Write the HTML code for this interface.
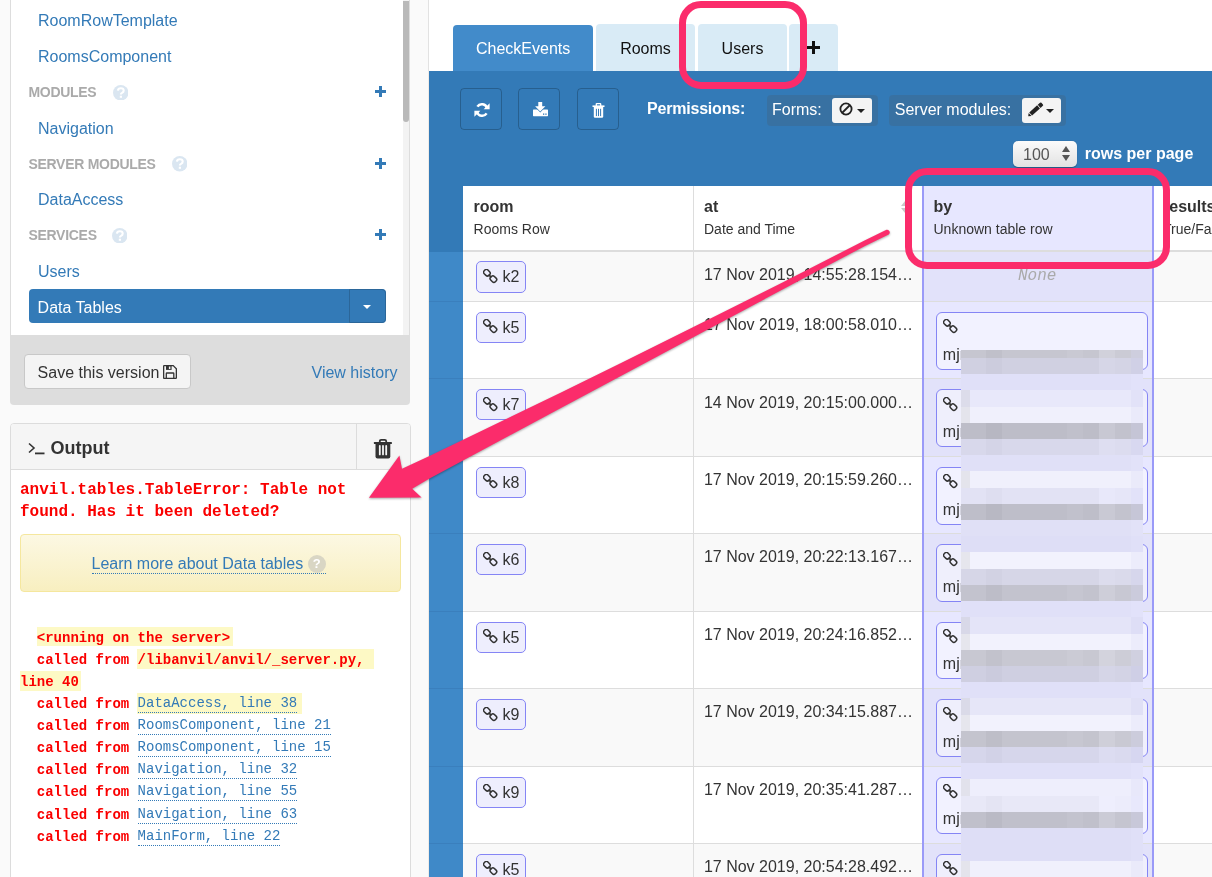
<!DOCTYPE html>
<html><head><meta charset="utf-8"><style>
html,body{margin:0;padding:0;}
body{will-change:transform;width:1212px;height:877px;overflow:hidden;position:relative;background:#fff;font-family:"Liberation Sans",sans-serif;}
.r{position:absolute;}
.t{position:absolute;white-space:nowrap;}
.help{border-radius:50%;color:#fff;font:bold 12px/15.5px "Liberation Sans",sans-serif;text-align:center;}
.dot{border-bottom:1px dotted #337ab7;padding-bottom:1px}
.qhelp{display:inline-block;width:18px;height:18px;border-radius:50%;background:#d9d6c4;color:#fff;font-size:13px;line-height:18px;text-align:center;font-weight:bold;vertical-align:1px}
.dotl{border-bottom:1px dotted #337ab7;line-height:17px!important;}
</style></head><body>
<div class="r" style="left:0.00px;top:0.00px;width:428.00px;height:877.00px;background:#fafafa"></div>
<div class="r" style="left:428.00px;top:71.00px;width:1.00px;height:806.00px;background:#efebe7"></div>
<div class="r" style="left:10.00px;top:-2.00px;width:400.00px;height:337.00px;background:#fff;border:1px solid #ddd;border-bottom:none;box-sizing:border-box"></div>
<div class="r" style="left:10.00px;top:335.00px;width:400.00px;height:69.50px;background:#dddddd;border-radius:0 0 4px 4px"></div>
<div class="r" style="left:402.50px;top:0.00px;width:6.50px;height:335.00px;background:#f3f3f3"></div>
<div class="r" style="left:403.00px;top:1.00px;width:6.00px;height:121.00px;background:#b9b9b9;border-radius:0 0 3px 3px"></div>
<div class="t " style="left:38.00px;top:11px;font-size:16px;line-height:20px;font-weight:normal;color:#337ab7;font-family:'Liberation Sans', sans-serif;">RoomRowTemplate</div>
<div class="t " style="left:38.00px;top:47px;font-size:16px;line-height:20px;font-weight:normal;color:#337ab7;font-family:'Liberation Sans', sans-serif;">RoomsComponent</div>
<div class="t " style="left:28.40px;top:83px;font-size:14px;line-height:18px;font-weight:bold;color:#aaaaaa;font-family:'Liberation Sans', sans-serif;letter-spacing:-0.28px">MODULES</div>
<svg class="r" style="left:112.85px;top:84.55px" width="15.5" height="15.5" viewBox="0 0 15.5 15.5"><circle cx="7.75" cy="7.75" r="7.75" fill="#dae6f1"/><path d="M4.9 5.6Q5.1 3.2 7.9 3.2Q10.7 3.2 10.7 5.6Q10.7 7.1 9.1 7.9Q7.9 8.5 7.9 9.6" fill="none" stroke="#fff" stroke-width="2.1"/><rect x="6.8" y="10.7" width="2.2" height="2.1" fill="#fff"/></svg>
<div class="r" style="left:375.00px;top:90.10px;width:11.00px;height:2.80px;background:#337ab7"></div>
<div class="r" style="left:379.10px;top:86.00px;width:2.80px;height:11.00px;background:#337ab7"></div>
<div class="t " style="left:38.00px;top:119px;font-size:16px;line-height:20px;font-weight:normal;color:#337ab7;font-family:'Liberation Sans', sans-serif;">Navigation</div>
<div class="t " style="left:28.40px;top:155px;font-size:14px;line-height:18px;font-weight:bold;color:#aaaaaa;font-family:'Liberation Sans', sans-serif;letter-spacing:-0.28px">SERVER MODULES</div>
<svg class="r" style="left:171.65px;top:156.25px" width="15.5" height="15.5" viewBox="0 0 15.5 15.5"><circle cx="7.75" cy="7.75" r="7.75" fill="#dae6f1"/><path d="M4.9 5.6Q5.1 3.2 7.9 3.2Q10.7 3.2 10.7 5.6Q10.7 7.1 9.1 7.9Q7.9 8.5 7.9 9.6" fill="none" stroke="#fff" stroke-width="2.1"/><rect x="6.8" y="10.7" width="2.2" height="2.1" fill="#fff"/></svg>
<div class="r" style="left:375.00px;top:161.80px;width:11.00px;height:2.80px;background:#337ab7"></div>
<div class="r" style="left:379.10px;top:157.70px;width:2.80px;height:11.00px;background:#337ab7"></div>
<div class="t " style="left:38.00px;top:190px;font-size:16px;line-height:20px;font-weight:normal;color:#337ab7;font-family:'Liberation Sans', sans-serif;">DataAccess</div>
<div class="t " style="left:28.40px;top:226px;font-size:14px;line-height:18px;font-weight:bold;color:#aaaaaa;font-family:'Liberation Sans', sans-serif;letter-spacing:-0.28px">SERVICES</div>
<svg class="r" style="left:111.65px;top:227.75px" width="15.5" height="15.5" viewBox="0 0 15.5 15.5"><circle cx="7.75" cy="7.75" r="7.75" fill="#dae6f1"/><path d="M4.9 5.6Q5.1 3.2 7.9 3.2Q10.7 3.2 10.7 5.6Q10.7 7.1 9.1 7.9Q7.9 8.5 7.9 9.6" fill="none" stroke="#fff" stroke-width="2.1"/><rect x="6.8" y="10.7" width="2.2" height="2.1" fill="#fff"/></svg>
<div class="r" style="left:375.00px;top:233.30px;width:11.00px;height:2.80px;background:#337ab7"></div>
<div class="r" style="left:379.10px;top:229.20px;width:2.80px;height:11.00px;background:#337ab7"></div>
<div class="t " style="left:38.00px;top:262px;font-size:16px;line-height:20px;font-weight:normal;color:#337ab7;font-family:'Liberation Sans', sans-serif;">Users</div>
<div class="r" style="left:29.00px;top:289.00px;width:357.00px;height:34.00px;background:#337ab7;border-radius:4px"></div>
<div class="r" style="left:349.00px;top:289.00px;width:37.00px;height:34.00px;border:1px solid #2b6699;border-radius:0 4px 4px 0;box-sizing:border-box"></div>
<div class="r" style="left:362.8px;top:304.5px;width:0;height:0;border-left:4px solid transparent;border-right:4px solid transparent;border-top:4px solid #fff"></div>
<div class="t " style="left:37.60px;top:298px;font-size:16px;line-height:20px;font-weight:normal;color:#fff;font-family:'Liberation Sans', sans-serif;">Data Tables</div>
<div class="r" style="left:23.80px;top:353.60px;width:167.70px;height:35.60px;background:#f4f4f4;border:1px solid #c8c8c8;border-radius:4px;box-sizing:border-box"></div>
<div class="t " style="left:37.60px;top:363px;font-size:16px;line-height:20px;font-weight:normal;color:#333;font-family:'Liberation Sans', sans-serif;">Save this version</div>
<svg class="r" style="left:163.2px;top:365.1px" width="14" height="14" viewBox="0 0 14 14"><path d="M0.65 1.2Q0.65 0.65 1.2 0.65H10.2L13.35 3.8V12.8Q13.35 13.35 12.8 13.35H1.2Q0.65 13.35 0.65 12.8Z" fill="none" stroke="#333" stroke-width="1.3"/><rect x="3" y="0.7" width="5.6" height="4.2" fill="#333"/><rect x="5.9" y="1.5" width="1.5" height="2.5" fill="#f4f4f4"/><path d="M3.3 13.3V8.6Q3.3 8 3.9 8H10.2Q10.8 8 10.8 8.6V13.3" fill="none" stroke="#333" stroke-width="1.3"/></svg>
<div class="t " style="left:311.50px;top:363px;font-size:16px;line-height:20px;font-weight:normal;color:#337ab7;font-family:'Liberation Sans', sans-serif;">View history</div>
<div class="r" style="left:10.00px;top:423.40px;width:400.50px;height:476.60px;background:#fff;border:1px solid #dcdcdc;border-radius:4px;box-sizing:border-box"></div>
<div class="r" style="left:11.00px;top:424.40px;width:398.50px;height:45.60px;background:#f5f5f5;border-bottom:1px solid #dcdcdc;border-radius:3px 3px 0 0;box-sizing:border-box"></div>
<div class="r" style="left:356.00px;top:424.40px;width:1.00px;height:45.10px;background:#dcdcdc"></div>
<svg class="r" style="left:28px;top:442px" width="18" height="14" viewBox="0 0 18 14"><path d="M1 1.5L6 6L1 10.5" fill="none" stroke="#333" stroke-width="1.6"/><rect x="7" y="10.5" width="9.5" height="1.8" fill="#333"/></svg>
<div class="t " style="left:50.60px;top:437px;font-size:18px;line-height:22px;font-weight:bold;color:#333;font-family:'Liberation Sans', sans-serif;">Output</div>
<svg class="r" style="left:373px;top:438px" width="20" height="22" viewBox="0 0 20 22"><path d="M6.8 4.5V3.2Q6.8 1.8 8.2 1.8H11.8Q13.2 1.8 13.2 3.2V4.5" fill="none" stroke="#333" stroke-width="1.8"/><rect x="0.9" y="4.1" width="18" height="1.8" rx="0.5" fill="#333"/><path d="M2.5 5.5H17.3V18.5Q17.3 20.5 15.3 20.5H4.5Q2.5 20.5 2.5 18.5Z" fill="#333"/><rect x="5.9" y="7" width="1.8" height="10.3" rx="0.9" fill="#f5f5f5"/><rect x="9.1" y="7" width="1.8" height="10.3" rx="0.9" fill="#f5f5f5"/><rect x="12.3" y="7" width="1.8" height="10.3" rx="0.9" fill="#f5f5f5"/></svg>
<div class="t " style="left:20.00px;top:480px;font-size:16px;line-height:20px;font-weight:bold;color:#fa0000;font-family:'Liberation Mono', monospace;">anvil.tables.TableError: Table not</div>
<div class="t " style="left:20.00px;top:502px;font-size:16px;line-height:20px;font-weight:bold;color:#fa0000;font-family:'Liberation Mono', monospace;">found. Has it been deleted?</div>
<div class="r" style="left:20.00px;top:534.00px;width:381.00px;height:57.60px;background:linear-gradient(#fcf8e3,#f8efc0);border:1px solid #f5e79e;border-radius:4px;box-sizing:border-box"></div>
<div class="t " style="left:91.50px;top:554px;font-size:16px;line-height:20px;font-weight:normal;color:#337ab7;font-family:'Liberation Sans', sans-serif;"><span class="dot">Learn more about Data tables <span class="qhelp">?</span></span></div>
<div class="r" style="left:37.00px;top:627.00px;width:196.40px;height:19.00px;background:#fdf9c5"></div>
<div class="r" style="left:137.00px;top:649.00px;width:237.00px;height:19.50px;background:#fdf9c5"></div>
<div class="r" style="left:20.00px;top:671.40px;width:61.00px;height:19.60px;background:#fdf9c5"></div>
<div class="r" style="left:137.00px;top:693.40px;width:165.00px;height:20.20px;background:#fdf9c5"></div>
<div class="t " style="left:36.80px;top:629px;font-size:14px;line-height:18px;font-weight:bold;color:#fa0000;font-family:'Liberation Mono', monospace;">&lt;running on the server&gt;</div>
<div class="t " style="left:36.80px;top:651px;font-size:14px;line-height:18px;font-weight:bold;color:#fa0000;font-family:'Liberation Mono', monospace;">called from</div>
<div class="t " style="left:137.60px;top:651px;font-size:14px;line-height:18px;font-weight:bold;color:#fa0000;font-family:'Liberation Mono', monospace;">/libanvil/anvil/_server.py,</div>
<div class="t " style="left:20.00px;top:673px;font-size:14px;line-height:18px;font-weight:bold;color:#fa0000;font-family:'Liberation Mono', monospace;">line 40</div>
<div class="t " style="left:36.80px;top:695px;font-size:14px;line-height:18px;font-weight:bold;color:#fa0000;font-family:'Liberation Mono', monospace;">called from</div>
<div class="t dotl" style="left:137.60px;top:695px;font-size:14px;line-height:18px;font-weight:normal;color:#337ab7;font-family:'Liberation Mono', monospace;">DataAccess, line 38</div>
<div class="t " style="left:36.80px;top:717px;font-size:14px;line-height:18px;font-weight:bold;color:#fa0000;font-family:'Liberation Mono', monospace;">called from</div>
<div class="t dotl" style="left:137.60px;top:717px;font-size:14px;line-height:18px;font-weight:normal;color:#337ab7;font-family:'Liberation Mono', monospace;">RoomsComponent, line 21</div>
<div class="t " style="left:36.80px;top:739px;font-size:14px;line-height:18px;font-weight:bold;color:#fa0000;font-family:'Liberation Mono', monospace;">called from</div>
<div class="t dotl" style="left:137.60px;top:739px;font-size:14px;line-height:18px;font-weight:normal;color:#337ab7;font-family:'Liberation Mono', monospace;">RoomsComponent, line 15</div>
<div class="t " style="left:36.80px;top:761px;font-size:14px;line-height:18px;font-weight:bold;color:#fa0000;font-family:'Liberation Mono', monospace;">called from</div>
<div class="t dotl" style="left:137.60px;top:761px;font-size:14px;line-height:18px;font-weight:normal;color:#337ab7;font-family:'Liberation Mono', monospace;">Navigation, line 32</div>
<div class="t " style="left:36.80px;top:783px;font-size:14px;line-height:18px;font-weight:bold;color:#fa0000;font-family:'Liberation Mono', monospace;">called from</div>
<div class="t dotl" style="left:137.60px;top:783px;font-size:14px;line-height:18px;font-weight:normal;color:#337ab7;font-family:'Liberation Mono', monospace;">Navigation, line 55</div>
<div class="t " style="left:36.80px;top:806px;font-size:14px;line-height:18px;font-weight:bold;color:#fa0000;font-family:'Liberation Mono', monospace;">called from</div>
<div class="t dotl" style="left:137.60px;top:806px;font-size:14px;line-height:18px;font-weight:normal;color:#337ab7;font-family:'Liberation Mono', monospace;">Navigation, line 63</div>
<div class="t " style="left:36.80px;top:828px;font-size:14px;line-height:18px;font-weight:bold;color:#fa0000;font-family:'Liberation Mono', monospace;">called from</div>
<div class="t dotl" style="left:137.60px;top:828px;font-size:14px;line-height:18px;font-weight:normal;color:#337ab7;font-family:'Liberation Mono', monospace;">MainForm, line 22</div>
<div class="r" style="left:428.00px;top:0.00px;width:784.00px;height:71.00px;background:#fff"></div>
<div class="r" style="left:428.00px;top:0.00px;width:1.00px;height:71.00px;background:#e2e2e2"></div>
<div class="r" style="left:429.00px;top:71.00px;width:783.00px;height:806.00px;background:#337ab7"></div>
<div class="r" style="left:453.00px;top:25.00px;width:140.00px;height:46.00px;background:#428bca;border-radius:4px 4px 0 0"></div>
<div class="t " style="left:476.00px;top:39px;font-size:16px;line-height:20px;font-weight:normal;color:#fff;font-family:'Liberation Sans', sans-serif;">CheckEvents</div>
<div class="r" style="left:596.00px;top:24.00px;width:99.00px;height:47.00px;background:#d9ebf6;border-radius:4px 4px 0 0"></div>
<div class="t" style="left:596px;top:39px;width:99px;text-align:center;font-size:16px;line-height:20px;color:#111;font-family:'Liberation Sans',sans-serif">Rooms</div>
<div class="r" style="left:698.00px;top:24.00px;width:89.00px;height:47.00px;background:#d9ebf6;border-radius:4px 4px 0 0"></div>
<div class="t" style="left:698px;top:39px;width:89px;text-align:center;font-size:16px;line-height:20px;color:#111;font-family:'Liberation Sans',sans-serif">Users</div>
<div class="r" style="left:789.00px;top:24.00px;width:49.00px;height:47.00px;background:#d9ebf6;border-radius:4px 4px 0 0"></div>
<div class="r" style="left:807.00px;top:46.00px;width:13.00px;height:3.00px;background:#111"></div>
<div class="r" style="left:812.00px;top:41.00px;width:3.00px;height:13.00px;background:#111"></div>
<div class="r" style="left:460.30px;top:88.40px;width:41.60px;height:42.10px;border:1px solid rgba(0,0,0,0.22);border-radius:4px;box-sizing:border-box"></div>
<div class="r" style="left:518.40px;top:88.40px;width:42.10px;height:42.10px;border:1px solid rgba(0,0,0,0.22);border-radius:4px;box-sizing:border-box"></div>
<div class="r" style="left:577.00px;top:88.40px;width:41.70px;height:42.10px;border:1px solid rgba(0,0,0,0.22);border-radius:4px;box-sizing:border-box"></div>
<svg class="r" style="left:473.5px;top:101.8px" width="16" height="16" viewBox="0 0 16 16"><path d="M13 6.3A5.3 5.3 0 0 0 3.4 4.6" fill="none" stroke="#fff" stroke-width="2.5"/><path d="M9.6 7.2L15.6 7.2L15.6 1.2Z" fill="#fff"/><path d="M3 9.7A5.3 5.3 0 0 0 12.6 11.4" fill="none" stroke="#fff" stroke-width="2.5"/><path d="M6.4 8.8L0.4 8.8L0.4 14.8Z" fill="#fff"/></svg>
<svg class="r" style="left:533px;top:102px" width="15" height="14.5" viewBox="0 0 15 14.5"><rect x="0" y="7.6" width="15" height="6.6" rx="0.6" fill="#fff"/><path d="M5.3 0H9.2V4.3H12.4L7.25 9.6L2.1 4.3H5.3Z" fill="#fff" stroke="#337ab7" stroke-width="1.1" paint-order="stroke"/><rect x="10" y="11.5" width="1.3" height="1.3" fill="#337ab7"/><rect x="12.3" y="11.5" width="1.3" height="1.3" fill="#337ab7"/></svg>
<svg class="r" style="left:591.5px;top:102.5px" width="13" height="15" viewBox="0 0 13 15"><path d="M0.5 3.2H12.5" stroke="#fff" stroke-width="1.6"/><path d="M4.3 3V1.2Q4.3 0.7 4.8 0.7H8.2Q8.7 0.7 8.7 1.2V3" fill="none" stroke="#fff" stroke-width="1.3"/><path d="M1.8 4H11.2V13.5Q11.2 14.8 10 14.8H3Q1.8 14.8 1.8 13.5Z" fill="#fff"/><rect x="3.9" y="5.8" width="1" height="7.3" fill="#337ab7"/><rect x="6" y="5.8" width="1" height="7.3" fill="#337ab7"/><rect x="8.1" y="5.8" width="1" height="7.3" fill="#337ab7"/></svg>
<div class="t " style="left:647.00px;top:99px;font-size:16px;line-height:20px;font-weight:bold;color:#fff;font-family:'Liberation Sans', sans-serif;letter-spacing:-0.2px">Permissions:</div>
<div class="r" style="left:767.00px;top:94.70px;width:110.60px;height:31.70px;background:rgba(80,80,80,0.2);border-radius:4px"></div>
<div class="t " style="left:772.00px;top:100px;font-size:16px;line-height:20px;font-weight:normal;color:#fff;font-family:'Liberation Sans', sans-serif;">Forms:</div>
<div class="r" style="left:832.00px;top:98.30px;width:39.80px;height:24.30px;background:#f4f4f4;border-radius:3px"></div>
<svg class="r" style="left:839px;top:102px" width="14" height="14" viewBox="0 0 14 14"><circle cx="7" cy="7" r="5.6" fill="none" stroke="#222" stroke-width="1.8"/><path d="M3 11L11 3" stroke="#222" stroke-width="1.8"/></svg>
<div class="r" style="left:857px;top:109px;width:0;height:0;border-left:4px solid transparent;border-right:4px solid transparent;border-top:4px solid #222"></div>
<div class="r" style="left:889.00px;top:94.70px;width:177.00px;height:31.70px;background:rgba(80,80,80,0.2);border-radius:4px"></div>
<div class="t " style="left:894.80px;top:100px;font-size:16px;line-height:20px;font-weight:normal;color:#fff;font-family:'Liberation Sans', sans-serif;">Server modules:</div>
<div class="r" style="left:1022.00px;top:98.30px;width:38.50px;height:24.30px;background:#f4f4f4;border-radius:3px"></div>
<svg class="r" style="left:1026px;top:101px" width="18" height="18" viewBox="0 0 18 18"><g transform="translate(9.2 8.9) rotate(-42)"><path d="M-9.4 0L-6.9 -2.1V2.1Z" fill="#222"/><rect x="-6.1" y="-2.1" width="10.6" height="4.2" fill="#222"/><path d="M5.3 -2.1H8.4Q9.4 -2.1 9.4 -1.1V1.1Q9.4 2.1 8.4 2.1H5.3Z" fill="#222"/></g></svg>
<div class="r" style="left:1046px;top:109px;width:0;height:0;border-left:4px solid transparent;border-right:4px solid transparent;border-top:4px solid #222"></div>
<div class="r" style="left:1013.00px;top:140.80px;width:63.60px;height:25.90px;background:linear-gradient(#fbfbfb,#e2e2e2);border-radius:5px;box-shadow:0 0.5px 1px rgba(0,0,0,0.3)"></div>
<div class="t " style="left:1023.00px;top:145px;font-size:16px;line-height:20px;font-weight:normal;color:#555;font-family:'Liberation Sans', sans-serif;">100</div>
<div class="r" style="left:1061.5px;top:146px;width:0;height:0;border-left:4px solid transparent;border-right:4px solid transparent;border-bottom:6px solid #555"></div>
<div class="r" style="left:1061.5px;top:155px;width:0;height:0;border-left:4px solid transparent;border-right:4px solid transparent;border-top:6px solid #555"></div>
<div class="t " style="left:1084.80px;top:144px;font-size:16px;line-height:20px;font-weight:bold;color:#fff;font-family:'Liberation Sans', sans-serif;">rows per page</div>
<div class="r" style="left:429.00px;top:251.50px;width:34.00px;height:625.50px;background:#3f89c8"></div>
<div class="r" style="left:463.00px;top:186.00px;width:749.00px;height:691.00px;background:#fff"></div>
<div class="r" style="left:463.00px;top:252.00px;width:749.00px;height:49.40px;background:#f9f9f9"></div>
<div class="r" style="left:463.00px;top:301.40px;width:749.00px;height:77.44px;background:#fff"></div>
<div class="r" style="left:463.00px;top:378.84px;width:749.00px;height:77.44px;background:#f9f9f9"></div>
<div class="r" style="left:463.00px;top:456.28px;width:749.00px;height:77.44px;background:#fff"></div>
<div class="r" style="left:463.00px;top:533.72px;width:749.00px;height:77.44px;background:#f9f9f9"></div>
<div class="r" style="left:463.00px;top:611.16px;width:749.00px;height:77.44px;background:#fff"></div>
<div class="r" style="left:463.00px;top:688.60px;width:749.00px;height:77.44px;background:#f9f9f9"></div>
<div class="r" style="left:463.00px;top:766.04px;width:749.00px;height:77.44px;background:#fff"></div>
<div class="r" style="left:463.00px;top:843.48px;width:749.00px;height:77.44px;background:#f9f9f9"></div>
<div class="r" style="left:922.00px;top:186.00px;width:232.00px;height:691.00px;background:rgba(170,170,255,0.28)"></div>
<div class="r" style="left:463.00px;top:300.90px;width:749.00px;height:1.00px;background:#dddddd"></div>
<div class="r" style="left:429.00px;top:300.90px;width:34.00px;height:1.00px;background:#3a7fbd"></div>
<div class="r" style="left:463.00px;top:378.34px;width:749.00px;height:1.00px;background:#dddddd"></div>
<div class="r" style="left:429.00px;top:378.34px;width:34.00px;height:1.00px;background:#3a7fbd"></div>
<div class="r" style="left:463.00px;top:455.78px;width:749.00px;height:1.00px;background:#dddddd"></div>
<div class="r" style="left:429.00px;top:455.78px;width:34.00px;height:1.00px;background:#3a7fbd"></div>
<div class="r" style="left:463.00px;top:533.22px;width:749.00px;height:1.00px;background:#dddddd"></div>
<div class="r" style="left:429.00px;top:533.22px;width:34.00px;height:1.00px;background:#3a7fbd"></div>
<div class="r" style="left:463.00px;top:610.66px;width:749.00px;height:1.00px;background:#dddddd"></div>
<div class="r" style="left:429.00px;top:610.66px;width:34.00px;height:1.00px;background:#3a7fbd"></div>
<div class="r" style="left:463.00px;top:688.10px;width:749.00px;height:1.00px;background:#dddddd"></div>
<div class="r" style="left:429.00px;top:688.10px;width:34.00px;height:1.00px;background:#3a7fbd"></div>
<div class="r" style="left:463.00px;top:765.54px;width:749.00px;height:1.00px;background:#dddddd"></div>
<div class="r" style="left:429.00px;top:765.54px;width:34.00px;height:1.00px;background:#3a7fbd"></div>
<div class="r" style="left:463.00px;top:842.98px;width:749.00px;height:1.00px;background:#dddddd"></div>
<div class="r" style="left:429.00px;top:842.98px;width:34.00px;height:1.00px;background:#3a7fbd"></div>
<div class="r" style="left:463.00px;top:250.00px;width:749.00px;height:2.00px;background:#dddddd"></div>
<div class="r" style="left:693.10px;top:186.00px;width:1.00px;height:691.00px;background:#dddddd"></div>
<div class="r" style="left:922.00px;top:186.00px;width:2.00px;height:691.00px;background:#9a9af8"></div>
<div class="r" style="left:1152.00px;top:186.00px;width:2.00px;height:691.00px;background:#9a9af8"></div>
<div class="t " style="left:473.60px;top:197px;font-size:16px;line-height:20px;font-weight:bold;color:#333;font-family:'Liberation Sans', sans-serif;">room</div>
<div class="t " style="left:473.60px;top:220px;font-size:14px;line-height:18px;font-weight:normal;color:#333;font-family:'Liberation Sans', sans-serif;">Rooms Row</div>
<div class="t " style="left:704.00px;top:197px;font-size:16px;line-height:20px;font-weight:bold;color:#333;font-family:'Liberation Sans', sans-serif;">at</div>
<div class="r" style="left:901px;top:201px;width:0;height:0;border-left:4px solid transparent;border-right:4px solid transparent;border-bottom:5px solid #c8c8c8"></div>
<div class="r" style="left:901px;top:208px;width:0;height:0;border-left:4px solid transparent;border-right:4px solid transparent;border-top:5px solid #c8c8c8"></div>
<div class="t " style="left:704.00px;top:220px;font-size:14px;line-height:18px;font-weight:normal;color:#333;font-family:'Liberation Sans', sans-serif;">Date and Time</div>
<div class="t " style="left:933.50px;top:197px;font-size:16px;line-height:20px;font-weight:bold;color:#333;font-family:'Liberation Sans', sans-serif;">by</div>
<div class="t " style="left:933.50px;top:220px;font-size:14px;line-height:18px;font-weight:normal;color:#333;font-family:'Liberation Sans', sans-serif;">Unknown table row</div>
<div class="t " style="left:1163.00px;top:197px;font-size:16px;line-height:20px;font-weight:bold;color:#333;font-family:'Liberation Sans', sans-serif;">results</div>
<div class="t " style="left:1163.00px;top:220px;font-size:14px;line-height:18px;font-weight:normal;color:#333;font-family:'Liberation Sans', sans-serif;">True/False</div>
<div class="r" style="left:476.00px;top:261.00px;width:50.00px;height:31.80px;background:#eeeefd;border:1px solid #8585f5;border-radius:5px;box-sizing:border-box"></div>
<svg class="r" style="left:482.50px;top:268.50px" width="15" height="15" viewBox="0 0 15 15"><rect x="0.6" y="1.1" width="6.6" height="5.2" rx="2.1" transform="rotate(45 3.9 3.7)" fill="none" stroke="#333" stroke-width="1.5"/><rect x="7.1" y="7.5" width="6.6" height="5.2" rx="2.1" transform="rotate(45 10.4 10.1)" fill="none" stroke="#333" stroke-width="1.5"/><path d="M5.6 5.6L8.4 8.4" stroke="#333" stroke-width="1.7"/></svg>
<div class="t " style="left:502.60px;top:267px;font-size:16px;line-height:20px;font-weight:normal;color:#333;font-family:'Liberation Sans', sans-serif;">k2</div>
<div class="t " style="left:703.90px;top:265px;font-size:16px;line-height:20px;font-weight:normal;color:#333;font-family:'Liberation Sans', sans-serif;">17 Nov 2019, 14:55:28.154…</div>
<div class="t " style="left:1018.00px;top:266px;font-size:16px;line-height:20px;font-weight:normal;color:#aaaaaa;font-family:'Liberation Mono', monospace;font-style:italic">None</div>
<div class="r" style="left:476.00px;top:311.90px;width:50.00px;height:31.00px;background:#eeeefd;border:1px solid #8585f5;border-radius:5px;box-sizing:border-box"></div>
<svg class="r" style="left:482.50px;top:319.40px" width="15" height="15" viewBox="0 0 15 15"><rect x="0.6" y="1.1" width="6.6" height="5.2" rx="2.1" transform="rotate(45 3.9 3.7)" fill="none" stroke="#333" stroke-width="1.5"/><rect x="7.1" y="7.5" width="6.6" height="5.2" rx="2.1" transform="rotate(45 10.4 10.1)" fill="none" stroke="#333" stroke-width="1.5"/><path d="M5.6 5.6L8.4 8.4" stroke="#333" stroke-width="1.7"/></svg>
<div class="t " style="left:502.60px;top:318px;font-size:16px;line-height:20px;font-weight:normal;color:#333;font-family:'Liberation Sans', sans-serif;">k5</div>
<div class="t " style="left:703.90px;top:315px;font-size:16px;line-height:20px;font-weight:normal;color:#333;font-family:'Liberation Sans', sans-serif;">17 Nov 2019, 18:00:58.010…</div>
<div class="r" style="left:936.20px;top:311.90px;width:211.80px;height:57.80px;background:rgba(255,255,255,0.45);border:1px solid #8585f5;border-radius:6px;box-sizing:border-box"></div>
<svg class="r" style="left:942.50px;top:319.40px" width="15" height="15" viewBox="0 0 15 15"><rect x="0.6" y="1.1" width="6.6" height="5.2" rx="2.1" transform="rotate(45 3.9 3.7)" fill="none" stroke="#333" stroke-width="1.5"/><rect x="7.1" y="7.5" width="6.6" height="5.2" rx="2.1" transform="rotate(45 10.4 10.1)" fill="none" stroke="#333" stroke-width="1.5"/><path d="M5.6 5.6L8.4 8.4" stroke="#333" stroke-width="1.7"/></svg>
<div class="t " style="left:942.80px;top:345px;font-size:16px;line-height:20px;font-weight:normal;color:#333;font-family:'Liberation Sans', sans-serif;">mjn</div>
<div class="r" style="left:476.00px;top:389.34px;width:50.00px;height:31.00px;background:#eeeefd;border:1px solid #8585f5;border-radius:5px;box-sizing:border-box"></div>
<svg class="r" style="left:482.50px;top:396.84px" width="15" height="15" viewBox="0 0 15 15"><rect x="0.6" y="1.1" width="6.6" height="5.2" rx="2.1" transform="rotate(45 3.9 3.7)" fill="none" stroke="#333" stroke-width="1.5"/><rect x="7.1" y="7.5" width="6.6" height="5.2" rx="2.1" transform="rotate(45 10.4 10.1)" fill="none" stroke="#333" stroke-width="1.5"/><path d="M5.6 5.6L8.4 8.4" stroke="#333" stroke-width="1.7"/></svg>
<div class="t " style="left:502.60px;top:395px;font-size:16px;line-height:20px;font-weight:normal;color:#333;font-family:'Liberation Sans', sans-serif;">k7</div>
<div class="t " style="left:703.90px;top:393px;font-size:16px;line-height:20px;font-weight:normal;color:#333;font-family:'Liberation Sans', sans-serif;">14 Nov 2019, 20:15:00.000…</div>
<div class="r" style="left:936.20px;top:389.34px;width:211.80px;height:57.80px;background:rgba(255,255,255,0.45);border:1px solid #8585f5;border-radius:6px;box-sizing:border-box"></div>
<svg class="r" style="left:942.50px;top:396.84px" width="15" height="15" viewBox="0 0 15 15"><rect x="0.6" y="1.1" width="6.6" height="5.2" rx="2.1" transform="rotate(45 3.9 3.7)" fill="none" stroke="#333" stroke-width="1.5"/><rect x="7.1" y="7.5" width="6.6" height="5.2" rx="2.1" transform="rotate(45 10.4 10.1)" fill="none" stroke="#333" stroke-width="1.5"/><path d="M5.6 5.6L8.4 8.4" stroke="#333" stroke-width="1.7"/></svg>
<div class="t " style="left:942.80px;top:422px;font-size:16px;line-height:20px;font-weight:normal;color:#333;font-family:'Liberation Sans', sans-serif;">mjn</div>
<div class="r" style="left:476.00px;top:466.78px;width:50.00px;height:31.00px;background:#eeeefd;border:1px solid #8585f5;border-radius:5px;box-sizing:border-box"></div>
<svg class="r" style="left:482.50px;top:474.28px" width="15" height="15" viewBox="0 0 15 15"><rect x="0.6" y="1.1" width="6.6" height="5.2" rx="2.1" transform="rotate(45 3.9 3.7)" fill="none" stroke="#333" stroke-width="1.5"/><rect x="7.1" y="7.5" width="6.6" height="5.2" rx="2.1" transform="rotate(45 10.4 10.1)" fill="none" stroke="#333" stroke-width="1.5"/><path d="M5.6 5.6L8.4 8.4" stroke="#333" stroke-width="1.7"/></svg>
<div class="t " style="left:502.60px;top:473px;font-size:16px;line-height:20px;font-weight:normal;color:#333;font-family:'Liberation Sans', sans-serif;">k8</div>
<div class="t " style="left:703.90px;top:470px;font-size:16px;line-height:20px;font-weight:normal;color:#333;font-family:'Liberation Sans', sans-serif;">17 Nov 2019, 20:15:59.260…</div>
<div class="r" style="left:936.20px;top:466.78px;width:211.80px;height:57.80px;background:rgba(255,255,255,0.45);border:1px solid #8585f5;border-radius:6px;box-sizing:border-box"></div>
<svg class="r" style="left:942.50px;top:474.28px" width="15" height="15" viewBox="0 0 15 15"><rect x="0.6" y="1.1" width="6.6" height="5.2" rx="2.1" transform="rotate(45 3.9 3.7)" fill="none" stroke="#333" stroke-width="1.5"/><rect x="7.1" y="7.5" width="6.6" height="5.2" rx="2.1" transform="rotate(45 10.4 10.1)" fill="none" stroke="#333" stroke-width="1.5"/><path d="M5.6 5.6L8.4 8.4" stroke="#333" stroke-width="1.7"/></svg>
<div class="t " style="left:942.80px;top:500px;font-size:16px;line-height:20px;font-weight:normal;color:#333;font-family:'Liberation Sans', sans-serif;">mjn</div>
<div class="r" style="left:476.00px;top:544.22px;width:50.00px;height:31.00px;background:#eeeefd;border:1px solid #8585f5;border-radius:5px;box-sizing:border-box"></div>
<svg class="r" style="left:482.50px;top:551.72px" width="15" height="15" viewBox="0 0 15 15"><rect x="0.6" y="1.1" width="6.6" height="5.2" rx="2.1" transform="rotate(45 3.9 3.7)" fill="none" stroke="#333" stroke-width="1.5"/><rect x="7.1" y="7.5" width="6.6" height="5.2" rx="2.1" transform="rotate(45 10.4 10.1)" fill="none" stroke="#333" stroke-width="1.5"/><path d="M5.6 5.6L8.4 8.4" stroke="#333" stroke-width="1.7"/></svg>
<div class="t " style="left:502.60px;top:550px;font-size:16px;line-height:20px;font-weight:normal;color:#333;font-family:'Liberation Sans', sans-serif;">k6</div>
<div class="t " style="left:703.90px;top:547px;font-size:16px;line-height:20px;font-weight:normal;color:#333;font-family:'Liberation Sans', sans-serif;">17 Nov 2019, 20:22:13.167…</div>
<div class="r" style="left:936.20px;top:544.22px;width:211.80px;height:57.80px;background:rgba(255,255,255,0.45);border:1px solid #8585f5;border-radius:6px;box-sizing:border-box"></div>
<svg class="r" style="left:942.50px;top:551.72px" width="15" height="15" viewBox="0 0 15 15"><rect x="0.6" y="1.1" width="6.6" height="5.2" rx="2.1" transform="rotate(45 3.9 3.7)" fill="none" stroke="#333" stroke-width="1.5"/><rect x="7.1" y="7.5" width="6.6" height="5.2" rx="2.1" transform="rotate(45 10.4 10.1)" fill="none" stroke="#333" stroke-width="1.5"/><path d="M5.6 5.6L8.4 8.4" stroke="#333" stroke-width="1.7"/></svg>
<div class="t " style="left:942.80px;top:577px;font-size:16px;line-height:20px;font-weight:normal;color:#333;font-family:'Liberation Sans', sans-serif;">mjn</div>
<div class="r" style="left:476.00px;top:621.66px;width:50.00px;height:31.00px;background:#eeeefd;border:1px solid #8585f5;border-radius:5px;box-sizing:border-box"></div>
<svg class="r" style="left:482.50px;top:629.16px" width="15" height="15" viewBox="0 0 15 15"><rect x="0.6" y="1.1" width="6.6" height="5.2" rx="2.1" transform="rotate(45 3.9 3.7)" fill="none" stroke="#333" stroke-width="1.5"/><rect x="7.1" y="7.5" width="6.6" height="5.2" rx="2.1" transform="rotate(45 10.4 10.1)" fill="none" stroke="#333" stroke-width="1.5"/><path d="M5.6 5.6L8.4 8.4" stroke="#333" stroke-width="1.7"/></svg>
<div class="t " style="left:502.60px;top:628px;font-size:16px;line-height:20px;font-weight:normal;color:#333;font-family:'Liberation Sans', sans-serif;">k5</div>
<div class="t " style="left:703.90px;top:625px;font-size:16px;line-height:20px;font-weight:normal;color:#333;font-family:'Liberation Sans', sans-serif;">17 Nov 2019, 20:24:16.852…</div>
<div class="r" style="left:936.20px;top:621.66px;width:211.80px;height:57.80px;background:rgba(255,255,255,0.45);border:1px solid #8585f5;border-radius:6px;box-sizing:border-box"></div>
<svg class="r" style="left:942.50px;top:629.16px" width="15" height="15" viewBox="0 0 15 15"><rect x="0.6" y="1.1" width="6.6" height="5.2" rx="2.1" transform="rotate(45 3.9 3.7)" fill="none" stroke="#333" stroke-width="1.5"/><rect x="7.1" y="7.5" width="6.6" height="5.2" rx="2.1" transform="rotate(45 10.4 10.1)" fill="none" stroke="#333" stroke-width="1.5"/><path d="M5.6 5.6L8.4 8.4" stroke="#333" stroke-width="1.7"/></svg>
<div class="t " style="left:942.80px;top:654px;font-size:16px;line-height:20px;font-weight:normal;color:#333;font-family:'Liberation Sans', sans-serif;">mjn</div>
<div class="r" style="left:476.00px;top:699.10px;width:50.00px;height:31.00px;background:#eeeefd;border:1px solid #8585f5;border-radius:5px;box-sizing:border-box"></div>
<svg class="r" style="left:482.50px;top:706.60px" width="15" height="15" viewBox="0 0 15 15"><rect x="0.6" y="1.1" width="6.6" height="5.2" rx="2.1" transform="rotate(45 3.9 3.7)" fill="none" stroke="#333" stroke-width="1.5"/><rect x="7.1" y="7.5" width="6.6" height="5.2" rx="2.1" transform="rotate(45 10.4 10.1)" fill="none" stroke="#333" stroke-width="1.5"/><path d="M5.6 5.6L8.4 8.4" stroke="#333" stroke-width="1.7"/></svg>
<div class="t " style="left:502.60px;top:705px;font-size:16px;line-height:20px;font-weight:normal;color:#333;font-family:'Liberation Sans', sans-serif;">k9</div>
<div class="t " style="left:703.90px;top:702px;font-size:16px;line-height:20px;font-weight:normal;color:#333;font-family:'Liberation Sans', sans-serif;">17 Nov 2019, 20:34:15.887…</div>
<div class="r" style="left:936.20px;top:699.10px;width:211.80px;height:57.80px;background:rgba(255,255,255,0.45);border:1px solid #8585f5;border-radius:6px;box-sizing:border-box"></div>
<svg class="r" style="left:942.50px;top:706.60px" width="15" height="15" viewBox="0 0 15 15"><rect x="0.6" y="1.1" width="6.6" height="5.2" rx="2.1" transform="rotate(45 3.9 3.7)" fill="none" stroke="#333" stroke-width="1.5"/><rect x="7.1" y="7.5" width="6.6" height="5.2" rx="2.1" transform="rotate(45 10.4 10.1)" fill="none" stroke="#333" stroke-width="1.5"/><path d="M5.6 5.6L8.4 8.4" stroke="#333" stroke-width="1.7"/></svg>
<div class="t " style="left:942.80px;top:732px;font-size:16px;line-height:20px;font-weight:normal;color:#333;font-family:'Liberation Sans', sans-serif;">mjn</div>
<div class="r" style="left:476.00px;top:776.54px;width:50.00px;height:31.00px;background:#eeeefd;border:1px solid #8585f5;border-radius:5px;box-sizing:border-box"></div>
<svg class="r" style="left:482.50px;top:784.04px" width="15" height="15" viewBox="0 0 15 15"><rect x="0.6" y="1.1" width="6.6" height="5.2" rx="2.1" transform="rotate(45 3.9 3.7)" fill="none" stroke="#333" stroke-width="1.5"/><rect x="7.1" y="7.5" width="6.6" height="5.2" rx="2.1" transform="rotate(45 10.4 10.1)" fill="none" stroke="#333" stroke-width="1.5"/><path d="M5.6 5.6L8.4 8.4" stroke="#333" stroke-width="1.7"/></svg>
<div class="t " style="left:502.60px;top:783px;font-size:16px;line-height:20px;font-weight:normal;color:#333;font-family:'Liberation Sans', sans-serif;">k9</div>
<div class="t " style="left:703.90px;top:780px;font-size:16px;line-height:20px;font-weight:normal;color:#333;font-family:'Liberation Sans', sans-serif;">17 Nov 2019, 20:35:41.287…</div>
<div class="r" style="left:936.20px;top:776.54px;width:211.80px;height:57.80px;background:rgba(255,255,255,0.45);border:1px solid #8585f5;border-radius:6px;box-sizing:border-box"></div>
<svg class="r" style="left:942.50px;top:784.04px" width="15" height="15" viewBox="0 0 15 15"><rect x="0.6" y="1.1" width="6.6" height="5.2" rx="2.1" transform="rotate(45 3.9 3.7)" fill="none" stroke="#333" stroke-width="1.5"/><rect x="7.1" y="7.5" width="6.6" height="5.2" rx="2.1" transform="rotate(45 10.4 10.1)" fill="none" stroke="#333" stroke-width="1.5"/><path d="M5.6 5.6L8.4 8.4" stroke="#333" stroke-width="1.7"/></svg>
<div class="t " style="left:942.80px;top:809px;font-size:16px;line-height:20px;font-weight:normal;color:#333;font-family:'Liberation Sans', sans-serif;">mjn</div>
<div class="r" style="left:476.00px;top:853.98px;width:50.00px;height:31.00px;background:#eeeefd;border:1px solid #8585f5;border-radius:5px;box-sizing:border-box"></div>
<svg class="r" style="left:482.50px;top:861.48px" width="15" height="15" viewBox="0 0 15 15"><rect x="0.6" y="1.1" width="6.6" height="5.2" rx="2.1" transform="rotate(45 3.9 3.7)" fill="none" stroke="#333" stroke-width="1.5"/><rect x="7.1" y="7.5" width="6.6" height="5.2" rx="2.1" transform="rotate(45 10.4 10.1)" fill="none" stroke="#333" stroke-width="1.5"/><path d="M5.6 5.6L8.4 8.4" stroke="#333" stroke-width="1.7"/></svg>
<div class="t " style="left:502.60px;top:860px;font-size:16px;line-height:20px;font-weight:normal;color:#333;font-family:'Liberation Sans', sans-serif;">k5</div>
<div class="t " style="left:703.90px;top:857px;font-size:16px;line-height:20px;font-weight:normal;color:#333;font-family:'Liberation Sans', sans-serif;">17 Nov 2019, 20:54:28.492…</div>
<div class="r" style="left:936.20px;top:853.98px;width:211.80px;height:57.80px;background:rgba(255,255,255,0.45);border:1px solid #8585f5;border-radius:6px;box-sizing:border-box"></div>
<svg class="r" style="left:942.50px;top:861.48px" width="15" height="15" viewBox="0 0 15 15"><rect x="0.6" y="1.1" width="6.6" height="5.2" rx="2.1" transform="rotate(45 3.9 3.7)" fill="none" stroke="#333" stroke-width="1.5"/><rect x="7.1" y="7.5" width="6.6" height="5.2" rx="2.1" transform="rotate(45 10.4 10.1)" fill="none" stroke="#333" stroke-width="1.5"/><path d="M5.6 5.6L8.4 8.4" stroke="#333" stroke-width="1.7"/></svg>
<div class="t " style="left:942.80px;top:887px;font-size:16px;line-height:20px;font-weight:normal;color:#333;font-family:'Liberation Sans', sans-serif;">mjn</div>
<div class="r" style="left:961.10px;top:350.00px;width:8.70px;height:7.90px;background:#c6c6d0"></div>
<div class="r" style="left:969.80px;top:350.00px;width:16.12px;height:7.90px;background:#c6c6d0"></div>
<div class="r" style="left:985.92px;top:350.00px;width:16.12px;height:7.90px;background:#c0c0ca"></div>
<div class="r" style="left:1002.04px;top:350.00px;width:16.12px;height:7.90px;background:#c6c6d0"></div>
<div class="r" style="left:1018.16px;top:350.00px;width:16.12px;height:7.90px;background:#c6c6d0"></div>
<div class="r" style="left:1034.28px;top:350.00px;width:16.12px;height:7.90px;background:#c6c6d0"></div>
<div class="r" style="left:1050.40px;top:350.00px;width:16.12px;height:7.90px;background:#c6c6d0"></div>
<div class="r" style="left:1066.52px;top:350.00px;width:16.12px;height:7.90px;background:#c9c9d3"></div>
<div class="r" style="left:1082.64px;top:350.00px;width:16.12px;height:7.90px;background:#c6c6d0"></div>
<div class="r" style="left:1098.76px;top:350.00px;width:16.12px;height:7.90px;background:#d1d1db"></div>
<div class="r" style="left:1114.88px;top:350.00px;width:16.12px;height:7.90px;background:#cbcbd5"></div>
<div class="r" style="left:1131.00px;top:350.00px;width:12.00px;height:7.90px;background:#cecede"></div>
<div class="r" style="left:961.10px;top:357.90px;width:8.70px;height:16.21px;background:#d0d0e1"></div>
<div class="r" style="left:969.80px;top:357.90px;width:16.12px;height:16.21px;background:#d0d0e1"></div>
<div class="r" style="left:985.92px;top:357.90px;width:16.12px;height:16.21px;background:#ccccdd"></div>
<div class="r" style="left:1002.04px;top:357.90px;width:16.12px;height:16.21px;background:#d0d0e1"></div>
<div class="r" style="left:1018.16px;top:357.90px;width:16.12px;height:16.21px;background:#d0d0e1"></div>
<div class="r" style="left:1034.28px;top:357.90px;width:16.12px;height:16.21px;background:#d0d0e1"></div>
<div class="r" style="left:1050.40px;top:357.90px;width:16.12px;height:16.21px;background:#d0d0e1"></div>
<div class="r" style="left:1066.52px;top:357.90px;width:16.12px;height:16.21px;background:#d0d0e1"></div>
<div class="r" style="left:1082.64px;top:357.90px;width:16.12px;height:16.21px;background:#d0d0e1"></div>
<div class="r" style="left:1098.76px;top:357.90px;width:16.12px;height:16.21px;background:#d6d6e7"></div>
<div class="r" style="left:1114.88px;top:357.90px;width:16.12px;height:16.21px;background:#d4d4e5"></div>
<div class="r" style="left:1131.00px;top:357.90px;width:12.00px;height:16.21px;background:#d0d0e6"></div>
<div class="r" style="left:961.10px;top:374.11px;width:8.70px;height:16.22px;background:#e0e0f8"></div>
<div class="r" style="left:969.80px;top:374.11px;width:16.12px;height:16.22px;background:#e0e0f8"></div>
<div class="r" style="left:985.92px;top:374.11px;width:16.12px;height:16.22px;background:#e0e0f8"></div>
<div class="r" style="left:1002.04px;top:374.11px;width:16.12px;height:16.22px;background:#e0e0f8"></div>
<div class="r" style="left:1018.16px;top:374.11px;width:16.12px;height:16.22px;background:#e0e0f8"></div>
<div class="r" style="left:1034.28px;top:374.11px;width:16.12px;height:16.22px;background:#e0e0f8"></div>
<div class="r" style="left:1050.40px;top:374.11px;width:16.12px;height:16.22px;background:#e0e0f8"></div>
<div class="r" style="left:1066.52px;top:374.11px;width:16.12px;height:16.22px;background:#e0e0f8"></div>
<div class="r" style="left:1082.64px;top:374.11px;width:16.12px;height:16.22px;background:#e0e0f8"></div>
<div class="r" style="left:1098.76px;top:374.11px;width:16.12px;height:16.22px;background:#e0e0f8"></div>
<div class="r" style="left:1114.88px;top:374.11px;width:16.12px;height:16.22px;background:#e0e0f8"></div>
<div class="r" style="left:1131.00px;top:374.11px;width:12.00px;height:16.22px;background:#e2e2fa"></div>
<div class="r" style="left:961.10px;top:390.33px;width:8.70px;height:16.21px;background:#dcdcea"></div>
<div class="r" style="left:969.80px;top:390.33px;width:16.12px;height:16.21px;background:#e8e8fa"></div>
<div class="r" style="left:985.92px;top:390.33px;width:16.12px;height:16.21px;background:#e8e8fa"></div>
<div class="r" style="left:1002.04px;top:390.33px;width:16.12px;height:16.21px;background:#e8e8fa"></div>
<div class="r" style="left:1018.16px;top:390.33px;width:16.12px;height:16.21px;background:#e8e8fa"></div>
<div class="r" style="left:1034.28px;top:390.33px;width:16.12px;height:16.21px;background:#e8e8fa"></div>
<div class="r" style="left:1050.40px;top:390.33px;width:16.12px;height:16.21px;background:#e8e8fa"></div>
<div class="r" style="left:1066.52px;top:390.33px;width:16.12px;height:16.21px;background:#e8e8fa"></div>
<div class="r" style="left:1082.64px;top:390.33px;width:16.12px;height:16.21px;background:#e8e8fa"></div>
<div class="r" style="left:1098.76px;top:390.33px;width:16.12px;height:16.21px;background:#e8e8fa"></div>
<div class="r" style="left:1114.88px;top:390.33px;width:16.12px;height:16.21px;background:#e8e8fa"></div>
<div class="r" style="left:1131.00px;top:390.33px;width:12.00px;height:16.21px;background:#e2e2f8"></div>
<div class="r" style="left:961.10px;top:406.54px;width:8.70px;height:16.22px;background:#e4e4ec"></div>
<div class="r" style="left:969.80px;top:406.54px;width:16.12px;height:16.22px;background:#f0f0fc"></div>
<div class="r" style="left:985.92px;top:406.54px;width:16.12px;height:16.22px;background:#f0f0fc"></div>
<div class="r" style="left:1002.04px;top:406.54px;width:16.12px;height:16.22px;background:#f0f0fc"></div>
<div class="r" style="left:1018.16px;top:406.54px;width:16.12px;height:16.22px;background:#f0f0fc"></div>
<div class="r" style="left:1034.28px;top:406.54px;width:16.12px;height:16.22px;background:#f0f0fc"></div>
<div class="r" style="left:1050.40px;top:406.54px;width:16.12px;height:16.22px;background:#f0f0fc"></div>
<div class="r" style="left:1066.52px;top:406.54px;width:16.12px;height:16.22px;background:#f0f0fc"></div>
<div class="r" style="left:1082.64px;top:406.54px;width:16.12px;height:16.22px;background:#f0f0fc"></div>
<div class="r" style="left:1098.76px;top:406.54px;width:16.12px;height:16.22px;background:#f0f0fc"></div>
<div class="r" style="left:1114.88px;top:406.54px;width:16.12px;height:16.22px;background:#f0f0fc"></div>
<div class="r" style="left:1131.00px;top:406.54px;width:12.00px;height:16.22px;background:#eaeafa"></div>
<div class="r" style="left:961.10px;top:422.76px;width:8.70px;height:16.21px;background:#bdbdc8"></div>
<div class="r" style="left:969.80px;top:422.76px;width:16.12px;height:16.21px;background:#bdbdc8"></div>
<div class="r" style="left:985.92px;top:422.76px;width:16.12px;height:16.21px;background:#b7b7c2"></div>
<div class="r" style="left:1002.04px;top:422.76px;width:16.12px;height:16.21px;background:#bdbdc8"></div>
<div class="r" style="left:1018.16px;top:422.76px;width:16.12px;height:16.21px;background:#bdbdc8"></div>
<div class="r" style="left:1034.28px;top:422.76px;width:16.12px;height:16.21px;background:#bdbdc8"></div>
<div class="r" style="left:1050.40px;top:422.76px;width:16.12px;height:16.21px;background:#bdbdc8"></div>
<div class="r" style="left:1066.52px;top:422.76px;width:16.12px;height:16.21px;background:#c0c0cb"></div>
<div class="r" style="left:1082.64px;top:422.76px;width:16.12px;height:16.21px;background:#bdbdc8"></div>
<div class="r" style="left:1098.76px;top:422.76px;width:16.12px;height:16.21px;background:#c8c8d3"></div>
<div class="r" style="left:1114.88px;top:422.76px;width:16.12px;height:16.21px;background:#c2c2cd"></div>
<div class="r" style="left:1131.00px;top:422.76px;width:12.00px;height:16.21px;background:#c5c5d6"></div>
<div class="r" style="left:961.10px;top:438.97px;width:8.70px;height:16.21px;background:#d8d8eb"></div>
<div class="r" style="left:969.80px;top:438.97px;width:16.12px;height:16.21px;background:#d8d8eb"></div>
<div class="r" style="left:985.92px;top:438.97px;width:16.12px;height:16.21px;background:#d4d4e7"></div>
<div class="r" style="left:1002.04px;top:438.97px;width:16.12px;height:16.21px;background:#d8d8eb"></div>
<div class="r" style="left:1018.16px;top:438.97px;width:16.12px;height:16.21px;background:#d8d8eb"></div>
<div class="r" style="left:1034.28px;top:438.97px;width:16.12px;height:16.21px;background:#d8d8eb"></div>
<div class="r" style="left:1050.40px;top:438.97px;width:16.12px;height:16.21px;background:#d8d8eb"></div>
<div class="r" style="left:1066.52px;top:438.97px;width:16.12px;height:16.21px;background:#d8d8eb"></div>
<div class="r" style="left:1082.64px;top:438.97px;width:16.12px;height:16.21px;background:#d8d8eb"></div>
<div class="r" style="left:1098.76px;top:438.97px;width:16.12px;height:16.21px;background:#dedef1"></div>
<div class="r" style="left:1114.88px;top:438.97px;width:16.12px;height:16.21px;background:#dcdcef"></div>
<div class="r" style="left:1131.00px;top:438.97px;width:12.00px;height:16.21px;background:#d8d8f0"></div>
<div class="r" style="left:961.10px;top:455.19px;width:8.70px;height:16.22px;background:#e0e0f7"></div>
<div class="r" style="left:969.80px;top:455.19px;width:16.12px;height:16.22px;background:#e0e0f7"></div>
<div class="r" style="left:985.92px;top:455.19px;width:16.12px;height:16.22px;background:#e0e0f7"></div>
<div class="r" style="left:1002.04px;top:455.19px;width:16.12px;height:16.22px;background:#e0e0f7"></div>
<div class="r" style="left:1018.16px;top:455.19px;width:16.12px;height:16.22px;background:#e0e0f7"></div>
<div class="r" style="left:1034.28px;top:455.19px;width:16.12px;height:16.22px;background:#e0e0f7"></div>
<div class="r" style="left:1050.40px;top:455.19px;width:16.12px;height:16.22px;background:#e0e0f7"></div>
<div class="r" style="left:1066.52px;top:455.19px;width:16.12px;height:16.22px;background:#e0e0f7"></div>
<div class="r" style="left:1082.64px;top:455.19px;width:16.12px;height:16.22px;background:#e0e0f7"></div>
<div class="r" style="left:1098.76px;top:455.19px;width:16.12px;height:16.22px;background:#e0e0f7"></div>
<div class="r" style="left:1114.88px;top:455.19px;width:16.12px;height:16.22px;background:#e0e0f7"></div>
<div class="r" style="left:1131.00px;top:455.19px;width:12.00px;height:16.22px;background:#e2e2f9"></div>
<div class="r" style="left:961.10px;top:471.40px;width:8.70px;height:16.22px;background:#e4e4ec"></div>
<div class="r" style="left:969.80px;top:471.40px;width:16.12px;height:16.22px;background:#f0f0fc"></div>
<div class="r" style="left:985.92px;top:471.40px;width:16.12px;height:16.22px;background:#f0f0fc"></div>
<div class="r" style="left:1002.04px;top:471.40px;width:16.12px;height:16.22px;background:#f0f0fc"></div>
<div class="r" style="left:1018.16px;top:471.40px;width:16.12px;height:16.22px;background:#f0f0fc"></div>
<div class="r" style="left:1034.28px;top:471.40px;width:16.12px;height:16.22px;background:#f0f0fc"></div>
<div class="r" style="left:1050.40px;top:471.40px;width:16.12px;height:16.22px;background:#f0f0fc"></div>
<div class="r" style="left:1066.52px;top:471.40px;width:16.12px;height:16.22px;background:#f0f0fc"></div>
<div class="r" style="left:1082.64px;top:471.40px;width:16.12px;height:16.22px;background:#f0f0fc"></div>
<div class="r" style="left:1098.76px;top:471.40px;width:16.12px;height:16.22px;background:#f0f0fc"></div>
<div class="r" style="left:1114.88px;top:471.40px;width:16.12px;height:16.22px;background:#f0f0fc"></div>
<div class="r" style="left:1131.00px;top:471.40px;width:12.00px;height:16.22px;background:#eaeafa"></div>
<div class="r" style="left:961.10px;top:487.62px;width:8.70px;height:16.21px;background:#e2e2f4"></div>
<div class="r" style="left:969.80px;top:487.62px;width:16.12px;height:16.21px;background:#e2e2f4"></div>
<div class="r" style="left:985.92px;top:487.62px;width:16.12px;height:16.21px;background:#dedef0"></div>
<div class="r" style="left:1002.04px;top:487.62px;width:16.12px;height:16.21px;background:#e2e2f4"></div>
<div class="r" style="left:1018.16px;top:487.62px;width:16.12px;height:16.21px;background:#e2e2f4"></div>
<div class="r" style="left:1034.28px;top:487.62px;width:16.12px;height:16.21px;background:#e2e2f4"></div>
<div class="r" style="left:1050.40px;top:487.62px;width:16.12px;height:16.21px;background:#e2e2f4"></div>
<div class="r" style="left:1066.52px;top:487.62px;width:16.12px;height:16.21px;background:#e2e2f4"></div>
<div class="r" style="left:1082.64px;top:487.62px;width:16.12px;height:16.21px;background:#e2e2f4"></div>
<div class="r" style="left:1098.76px;top:487.62px;width:16.12px;height:16.21px;background:#e8e8fa"></div>
<div class="r" style="left:1114.88px;top:487.62px;width:16.12px;height:16.21px;background:#e6e6f8"></div>
<div class="r" style="left:1131.00px;top:487.62px;width:12.00px;height:16.21px;background:#e2e2f9"></div>
<div class="r" style="left:961.10px;top:503.83px;width:8.70px;height:16.21px;background:#bebec9"></div>
<div class="r" style="left:969.80px;top:503.83px;width:16.12px;height:16.21px;background:#bebec9"></div>
<div class="r" style="left:985.92px;top:503.83px;width:16.12px;height:16.21px;background:#b8b8c3"></div>
<div class="r" style="left:1002.04px;top:503.83px;width:16.12px;height:16.21px;background:#bebec9"></div>
<div class="r" style="left:1018.16px;top:503.83px;width:16.12px;height:16.21px;background:#bebec9"></div>
<div class="r" style="left:1034.28px;top:503.83px;width:16.12px;height:16.21px;background:#bebec9"></div>
<div class="r" style="left:1050.40px;top:503.83px;width:16.12px;height:16.21px;background:#bebec9"></div>
<div class="r" style="left:1066.52px;top:503.83px;width:16.12px;height:16.21px;background:#c1c1cc"></div>
<div class="r" style="left:1082.64px;top:503.83px;width:16.12px;height:16.21px;background:#bebec9"></div>
<div class="r" style="left:1098.76px;top:503.83px;width:16.12px;height:16.21px;background:#c9c9d4"></div>
<div class="r" style="left:1114.88px;top:503.83px;width:16.12px;height:16.21px;background:#c3c3ce"></div>
<div class="r" style="left:1131.00px;top:503.83px;width:12.00px;height:16.21px;background:#c6c6d7"></div>
<div class="r" style="left:961.10px;top:520.05px;width:8.70px;height:16.22px;background:#e0e0f6"></div>
<div class="r" style="left:969.80px;top:520.05px;width:16.12px;height:16.22px;background:#e0e0f6"></div>
<div class="r" style="left:985.92px;top:520.05px;width:16.12px;height:16.22px;background:#e0e0f6"></div>
<div class="r" style="left:1002.04px;top:520.05px;width:16.12px;height:16.22px;background:#e0e0f6"></div>
<div class="r" style="left:1018.16px;top:520.05px;width:16.12px;height:16.22px;background:#e0e0f6"></div>
<div class="r" style="left:1034.28px;top:520.05px;width:16.12px;height:16.22px;background:#e0e0f6"></div>
<div class="r" style="left:1050.40px;top:520.05px;width:16.12px;height:16.22px;background:#e0e0f6"></div>
<div class="r" style="left:1066.52px;top:520.05px;width:16.12px;height:16.22px;background:#e0e0f6"></div>
<div class="r" style="left:1082.64px;top:520.05px;width:16.12px;height:16.22px;background:#e0e0f6"></div>
<div class="r" style="left:1098.76px;top:520.05px;width:16.12px;height:16.22px;background:#e0e0f6"></div>
<div class="r" style="left:1114.88px;top:520.05px;width:16.12px;height:16.22px;background:#e0e0f6"></div>
<div class="r" style="left:1131.00px;top:520.05px;width:12.00px;height:16.22px;background:#e2e2f8"></div>
<div class="r" style="left:961.10px;top:536.26px;width:8.70px;height:16.22px;background:#dedef6"></div>
<div class="r" style="left:969.80px;top:536.26px;width:16.12px;height:16.22px;background:#dedef6"></div>
<div class="r" style="left:985.92px;top:536.26px;width:16.12px;height:16.22px;background:#dedef6"></div>
<div class="r" style="left:1002.04px;top:536.26px;width:16.12px;height:16.22px;background:#dedef6"></div>
<div class="r" style="left:1018.16px;top:536.26px;width:16.12px;height:16.22px;background:#dedef6"></div>
<div class="r" style="left:1034.28px;top:536.26px;width:16.12px;height:16.22px;background:#dedef6"></div>
<div class="r" style="left:1050.40px;top:536.26px;width:16.12px;height:16.22px;background:#dedef6"></div>
<div class="r" style="left:1066.52px;top:536.26px;width:16.12px;height:16.22px;background:#dedef6"></div>
<div class="r" style="left:1082.64px;top:536.26px;width:16.12px;height:16.22px;background:#dedef6"></div>
<div class="r" style="left:1098.76px;top:536.26px;width:16.12px;height:16.22px;background:#dedef6"></div>
<div class="r" style="left:1114.88px;top:536.26px;width:16.12px;height:16.22px;background:#dedef6"></div>
<div class="r" style="left:1131.00px;top:536.26px;width:12.00px;height:16.22px;background:#e0e0f8"></div>
<div class="r" style="left:961.10px;top:552.48px;width:8.70px;height:16.21px;background:#e6e6ed"></div>
<div class="r" style="left:969.80px;top:552.48px;width:16.12px;height:16.21px;background:#f2f2fd"></div>
<div class="r" style="left:985.92px;top:552.48px;width:16.12px;height:16.21px;background:#f2f2fd"></div>
<div class="r" style="left:1002.04px;top:552.48px;width:16.12px;height:16.21px;background:#f2f2fd"></div>
<div class="r" style="left:1018.16px;top:552.48px;width:16.12px;height:16.21px;background:#f2f2fd"></div>
<div class="r" style="left:1034.28px;top:552.48px;width:16.12px;height:16.21px;background:#f2f2fd"></div>
<div class="r" style="left:1050.40px;top:552.48px;width:16.12px;height:16.21px;background:#f2f2fd"></div>
<div class="r" style="left:1066.52px;top:552.48px;width:16.12px;height:16.21px;background:#f2f2fd"></div>
<div class="r" style="left:1082.64px;top:552.48px;width:16.12px;height:16.21px;background:#f2f2fd"></div>
<div class="r" style="left:1098.76px;top:552.48px;width:16.12px;height:16.21px;background:#f2f2fd"></div>
<div class="r" style="left:1114.88px;top:552.48px;width:16.12px;height:16.21px;background:#f2f2fd"></div>
<div class="r" style="left:1131.00px;top:552.48px;width:12.00px;height:16.21px;background:#ececfb"></div>
<div class="r" style="left:961.10px;top:568.69px;width:8.70px;height:16.22px;background:#d6d6e7"></div>
<div class="r" style="left:969.80px;top:568.69px;width:16.12px;height:16.22px;background:#d6d6e7"></div>
<div class="r" style="left:985.92px;top:568.69px;width:16.12px;height:16.22px;background:#d2d2e3"></div>
<div class="r" style="left:1002.04px;top:568.69px;width:16.12px;height:16.22px;background:#d6d6e7"></div>
<div class="r" style="left:1018.16px;top:568.69px;width:16.12px;height:16.22px;background:#d6d6e7"></div>
<div class="r" style="left:1034.28px;top:568.69px;width:16.12px;height:16.22px;background:#d6d6e7"></div>
<div class="r" style="left:1050.40px;top:568.69px;width:16.12px;height:16.22px;background:#d6d6e7"></div>
<div class="r" style="left:1066.52px;top:568.69px;width:16.12px;height:16.22px;background:#d6d6e7"></div>
<div class="r" style="left:1082.64px;top:568.69px;width:16.12px;height:16.22px;background:#d6d6e7"></div>
<div class="r" style="left:1098.76px;top:568.69px;width:16.12px;height:16.22px;background:#dcdced"></div>
<div class="r" style="left:1114.88px;top:568.69px;width:16.12px;height:16.22px;background:#dadaeb"></div>
<div class="r" style="left:1131.00px;top:568.69px;width:12.00px;height:16.22px;background:#d6d6ec"></div>
<div class="r" style="left:961.10px;top:584.91px;width:8.70px;height:16.22px;background:#c3c3ce"></div>
<div class="r" style="left:969.80px;top:584.91px;width:16.12px;height:16.22px;background:#c3c3ce"></div>
<div class="r" style="left:985.92px;top:584.91px;width:16.12px;height:16.22px;background:#bdbdc8"></div>
<div class="r" style="left:1002.04px;top:584.91px;width:16.12px;height:16.22px;background:#c3c3ce"></div>
<div class="r" style="left:1018.16px;top:584.91px;width:16.12px;height:16.22px;background:#c3c3ce"></div>
<div class="r" style="left:1034.28px;top:584.91px;width:16.12px;height:16.22px;background:#c3c3ce"></div>
<div class="r" style="left:1050.40px;top:584.91px;width:16.12px;height:16.22px;background:#c3c3ce"></div>
<div class="r" style="left:1066.52px;top:584.91px;width:16.12px;height:16.22px;background:#c6c6d1"></div>
<div class="r" style="left:1082.64px;top:584.91px;width:16.12px;height:16.22px;background:#c3c3ce"></div>
<div class="r" style="left:1098.76px;top:584.91px;width:16.12px;height:16.22px;background:#ceced9"></div>
<div class="r" style="left:1114.88px;top:584.91px;width:16.12px;height:16.22px;background:#c8c8d3"></div>
<div class="r" style="left:1131.00px;top:584.91px;width:12.00px;height:16.22px;background:#cbcbdc"></div>
<div class="r" style="left:961.10px;top:601.12px;width:8.70px;height:16.21px;background:#e0e0f8"></div>
<div class="r" style="left:969.80px;top:601.12px;width:16.12px;height:16.21px;background:#e0e0f8"></div>
<div class="r" style="left:985.92px;top:601.12px;width:16.12px;height:16.21px;background:#e0e0f8"></div>
<div class="r" style="left:1002.04px;top:601.12px;width:16.12px;height:16.21px;background:#e0e0f8"></div>
<div class="r" style="left:1018.16px;top:601.12px;width:16.12px;height:16.21px;background:#e0e0f8"></div>
<div class="r" style="left:1034.28px;top:601.12px;width:16.12px;height:16.21px;background:#e0e0f8"></div>
<div class="r" style="left:1050.40px;top:601.12px;width:16.12px;height:16.21px;background:#e0e0f8"></div>
<div class="r" style="left:1066.52px;top:601.12px;width:16.12px;height:16.21px;background:#e0e0f8"></div>
<div class="r" style="left:1082.64px;top:601.12px;width:16.12px;height:16.21px;background:#e0e0f8"></div>
<div class="r" style="left:1098.76px;top:601.12px;width:16.12px;height:16.21px;background:#e0e0f8"></div>
<div class="r" style="left:1114.88px;top:601.12px;width:16.12px;height:16.21px;background:#e0e0f8"></div>
<div class="r" style="left:1131.00px;top:601.12px;width:12.00px;height:16.21px;background:#e2e2fa"></div>
<div class="r" style="left:961.10px;top:617.34px;width:8.70px;height:16.22px;background:#d8d8e8"></div>
<div class="r" style="left:969.80px;top:617.34px;width:16.12px;height:16.22px;background:#e4e4f8"></div>
<div class="r" style="left:985.92px;top:617.34px;width:16.12px;height:16.22px;background:#e4e4f8"></div>
<div class="r" style="left:1002.04px;top:617.34px;width:16.12px;height:16.22px;background:#e4e4f8"></div>
<div class="r" style="left:1018.16px;top:617.34px;width:16.12px;height:16.22px;background:#e4e4f8"></div>
<div class="r" style="left:1034.28px;top:617.34px;width:16.12px;height:16.22px;background:#e4e4f8"></div>
<div class="r" style="left:1050.40px;top:617.34px;width:16.12px;height:16.22px;background:#e4e4f8"></div>
<div class="r" style="left:1066.52px;top:617.34px;width:16.12px;height:16.22px;background:#e4e4f8"></div>
<div class="r" style="left:1082.64px;top:617.34px;width:16.12px;height:16.22px;background:#e4e4f8"></div>
<div class="r" style="left:1098.76px;top:617.34px;width:16.12px;height:16.22px;background:#e4e4f8"></div>
<div class="r" style="left:1114.88px;top:617.34px;width:16.12px;height:16.22px;background:#e4e4f8"></div>
<div class="r" style="left:1131.00px;top:617.34px;width:12.00px;height:16.22px;background:#dedef6"></div>
<div class="r" style="left:961.10px;top:633.55px;width:8.70px;height:16.22px;background:#e6e6ed"></div>
<div class="r" style="left:969.80px;top:633.55px;width:16.12px;height:16.22px;background:#f2f2fd"></div>
<div class="r" style="left:985.92px;top:633.55px;width:16.12px;height:16.22px;background:#f2f2fd"></div>
<div class="r" style="left:1002.04px;top:633.55px;width:16.12px;height:16.22px;background:#f2f2fd"></div>
<div class="r" style="left:1018.16px;top:633.55px;width:16.12px;height:16.22px;background:#f2f2fd"></div>
<div class="r" style="left:1034.28px;top:633.55px;width:16.12px;height:16.22px;background:#f2f2fd"></div>
<div class="r" style="left:1050.40px;top:633.55px;width:16.12px;height:16.22px;background:#f2f2fd"></div>
<div class="r" style="left:1066.52px;top:633.55px;width:16.12px;height:16.22px;background:#f2f2fd"></div>
<div class="r" style="left:1082.64px;top:633.55px;width:16.12px;height:16.22px;background:#f2f2fd"></div>
<div class="r" style="left:1098.76px;top:633.55px;width:16.12px;height:16.22px;background:#f2f2fd"></div>
<div class="r" style="left:1114.88px;top:633.55px;width:16.12px;height:16.22px;background:#f2f2fd"></div>
<div class="r" style="left:1131.00px;top:633.55px;width:12.00px;height:16.22px;background:#ececfb"></div>
<div class="r" style="left:961.10px;top:649.77px;width:8.70px;height:16.21px;background:#c8c8d2"></div>
<div class="r" style="left:969.80px;top:649.77px;width:16.12px;height:16.21px;background:#c8c8d2"></div>
<div class="r" style="left:985.92px;top:649.77px;width:16.12px;height:16.21px;background:#c2c2cc"></div>
<div class="r" style="left:1002.04px;top:649.77px;width:16.12px;height:16.21px;background:#c8c8d2"></div>
<div class="r" style="left:1018.16px;top:649.77px;width:16.12px;height:16.21px;background:#c8c8d2"></div>
<div class="r" style="left:1034.28px;top:649.77px;width:16.12px;height:16.21px;background:#c8c8d2"></div>
<div class="r" style="left:1050.40px;top:649.77px;width:16.12px;height:16.21px;background:#c8c8d2"></div>
<div class="r" style="left:1066.52px;top:649.77px;width:16.12px;height:16.21px;background:#cbcbd5"></div>
<div class="r" style="left:1082.64px;top:649.77px;width:16.12px;height:16.21px;background:#c8c8d2"></div>
<div class="r" style="left:1098.76px;top:649.77px;width:16.12px;height:16.21px;background:#d3d3dd"></div>
<div class="r" style="left:1114.88px;top:649.77px;width:16.12px;height:16.21px;background:#cdcdd7"></div>
<div class="r" style="left:1131.00px;top:649.77px;width:12.00px;height:16.21px;background:#d0d0e0"></div>
<div class="r" style="left:961.10px;top:665.98px;width:8.70px;height:16.22px;background:#cfcfe1"></div>
<div class="r" style="left:969.80px;top:665.98px;width:16.12px;height:16.22px;background:#cfcfe1"></div>
<div class="r" style="left:985.92px;top:665.98px;width:16.12px;height:16.22px;background:#cbcbdd"></div>
<div class="r" style="left:1002.04px;top:665.98px;width:16.12px;height:16.22px;background:#cfcfe1"></div>
<div class="r" style="left:1018.16px;top:665.98px;width:16.12px;height:16.22px;background:#cfcfe1"></div>
<div class="r" style="left:1034.28px;top:665.98px;width:16.12px;height:16.22px;background:#cfcfe1"></div>
<div class="r" style="left:1050.40px;top:665.98px;width:16.12px;height:16.22px;background:#cfcfe1"></div>
<div class="r" style="left:1066.52px;top:665.98px;width:16.12px;height:16.22px;background:#cfcfe1"></div>
<div class="r" style="left:1082.64px;top:665.98px;width:16.12px;height:16.22px;background:#cfcfe1"></div>
<div class="r" style="left:1098.76px;top:665.98px;width:16.12px;height:16.22px;background:#d5d5e7"></div>
<div class="r" style="left:1114.88px;top:665.98px;width:16.12px;height:16.22px;background:#d3d3e5"></div>
<div class="r" style="left:1131.00px;top:665.98px;width:12.00px;height:16.22px;background:#cfcfe6"></div>
<div class="r" style="left:961.10px;top:682.20px;width:8.70px;height:16.21px;background:#e0e0f8"></div>
<div class="r" style="left:969.80px;top:682.20px;width:16.12px;height:16.21px;background:#e0e0f8"></div>
<div class="r" style="left:985.92px;top:682.20px;width:16.12px;height:16.21px;background:#e0e0f8"></div>
<div class="r" style="left:1002.04px;top:682.20px;width:16.12px;height:16.21px;background:#e0e0f8"></div>
<div class="r" style="left:1018.16px;top:682.20px;width:16.12px;height:16.21px;background:#e0e0f8"></div>
<div class="r" style="left:1034.28px;top:682.20px;width:16.12px;height:16.21px;background:#e0e0f8"></div>
<div class="r" style="left:1050.40px;top:682.20px;width:16.12px;height:16.21px;background:#e0e0f8"></div>
<div class="r" style="left:1066.52px;top:682.20px;width:16.12px;height:16.21px;background:#e0e0f8"></div>
<div class="r" style="left:1082.64px;top:682.20px;width:16.12px;height:16.21px;background:#e0e0f8"></div>
<div class="r" style="left:1098.76px;top:682.20px;width:16.12px;height:16.21px;background:#e0e0f8"></div>
<div class="r" style="left:1114.88px;top:682.20px;width:16.12px;height:16.21px;background:#e0e0f8"></div>
<div class="r" style="left:1131.00px;top:682.20px;width:12.00px;height:16.21px;background:#e2e2fa"></div>
<div class="r" style="left:961.10px;top:698.41px;width:8.70px;height:16.22px;background:#dadae8"></div>
<div class="r" style="left:969.80px;top:698.41px;width:16.12px;height:16.22px;background:#e6e6f8"></div>
<div class="r" style="left:985.92px;top:698.41px;width:16.12px;height:16.22px;background:#e6e6f8"></div>
<div class="r" style="left:1002.04px;top:698.41px;width:16.12px;height:16.22px;background:#e6e6f8"></div>
<div class="r" style="left:1018.16px;top:698.41px;width:16.12px;height:16.22px;background:#e6e6f8"></div>
<div class="r" style="left:1034.28px;top:698.41px;width:16.12px;height:16.22px;background:#e6e6f8"></div>
<div class="r" style="left:1050.40px;top:698.41px;width:16.12px;height:16.22px;background:#e6e6f8"></div>
<div class="r" style="left:1066.52px;top:698.41px;width:16.12px;height:16.22px;background:#e6e6f8"></div>
<div class="r" style="left:1082.64px;top:698.41px;width:16.12px;height:16.22px;background:#e6e6f8"></div>
<div class="r" style="left:1098.76px;top:698.41px;width:16.12px;height:16.22px;background:#e6e6f8"></div>
<div class="r" style="left:1114.88px;top:698.41px;width:16.12px;height:16.22px;background:#e6e6f8"></div>
<div class="r" style="left:1131.00px;top:698.41px;width:12.00px;height:16.22px;background:#e0e0f6"></div>
<div class="r" style="left:961.10px;top:714.63px;width:8.70px;height:16.22px;background:#e6e6ed"></div>
<div class="r" style="left:969.80px;top:714.63px;width:16.12px;height:16.22px;background:#f2f2fd"></div>
<div class="r" style="left:985.92px;top:714.63px;width:16.12px;height:16.22px;background:#f2f2fd"></div>
<div class="r" style="left:1002.04px;top:714.63px;width:16.12px;height:16.22px;background:#f2f2fd"></div>
<div class="r" style="left:1018.16px;top:714.63px;width:16.12px;height:16.22px;background:#f2f2fd"></div>
<div class="r" style="left:1034.28px;top:714.63px;width:16.12px;height:16.22px;background:#f2f2fd"></div>
<div class="r" style="left:1050.40px;top:714.63px;width:16.12px;height:16.22px;background:#f2f2fd"></div>
<div class="r" style="left:1066.52px;top:714.63px;width:16.12px;height:16.22px;background:#f2f2fd"></div>
<div class="r" style="left:1082.64px;top:714.63px;width:16.12px;height:16.22px;background:#f2f2fd"></div>
<div class="r" style="left:1098.76px;top:714.63px;width:16.12px;height:16.22px;background:#f2f2fd"></div>
<div class="r" style="left:1114.88px;top:714.63px;width:16.12px;height:16.22px;background:#f2f2fd"></div>
<div class="r" style="left:1131.00px;top:714.63px;width:12.00px;height:16.22px;background:#ececfb"></div>
<div class="r" style="left:961.10px;top:730.85px;width:8.70px;height:16.21px;background:#c4c4ce"></div>
<div class="r" style="left:969.80px;top:730.85px;width:16.12px;height:16.21px;background:#c4c4ce"></div>
<div class="r" style="left:985.92px;top:730.85px;width:16.12px;height:16.21px;background:#bebec8"></div>
<div class="r" style="left:1002.04px;top:730.85px;width:16.12px;height:16.21px;background:#c4c4ce"></div>
<div class="r" style="left:1018.16px;top:730.85px;width:16.12px;height:16.21px;background:#c4c4ce"></div>
<div class="r" style="left:1034.28px;top:730.85px;width:16.12px;height:16.21px;background:#c4c4ce"></div>
<div class="r" style="left:1050.40px;top:730.85px;width:16.12px;height:16.21px;background:#c4c4ce"></div>
<div class="r" style="left:1066.52px;top:730.85px;width:16.12px;height:16.21px;background:#c7c7d1"></div>
<div class="r" style="left:1082.64px;top:730.85px;width:16.12px;height:16.21px;background:#c4c4ce"></div>
<div class="r" style="left:1098.76px;top:730.85px;width:16.12px;height:16.21px;background:#cfcfd9"></div>
<div class="r" style="left:1114.88px;top:730.85px;width:16.12px;height:16.21px;background:#c9c9d3"></div>
<div class="r" style="left:1131.00px;top:730.85px;width:12.00px;height:16.21px;background:#ccccdc"></div>
<div class="r" style="left:961.10px;top:747.06px;width:8.70px;height:16.22px;background:#d6d6eb"></div>
<div class="r" style="left:969.80px;top:747.06px;width:16.12px;height:16.22px;background:#d6d6eb"></div>
<div class="r" style="left:985.92px;top:747.06px;width:16.12px;height:16.22px;background:#d2d2e7"></div>
<div class="r" style="left:1002.04px;top:747.06px;width:16.12px;height:16.22px;background:#d6d6eb"></div>
<div class="r" style="left:1018.16px;top:747.06px;width:16.12px;height:16.22px;background:#d6d6eb"></div>
<div class="r" style="left:1034.28px;top:747.06px;width:16.12px;height:16.22px;background:#d6d6eb"></div>
<div class="r" style="left:1050.40px;top:747.06px;width:16.12px;height:16.22px;background:#d6d6eb"></div>
<div class="r" style="left:1066.52px;top:747.06px;width:16.12px;height:16.22px;background:#d6d6eb"></div>
<div class="r" style="left:1082.64px;top:747.06px;width:16.12px;height:16.22px;background:#d6d6eb"></div>
<div class="r" style="left:1098.76px;top:747.06px;width:16.12px;height:16.22px;background:#dcdcf1"></div>
<div class="r" style="left:1114.88px;top:747.06px;width:16.12px;height:16.22px;background:#dadaef"></div>
<div class="r" style="left:1131.00px;top:747.06px;width:12.00px;height:16.22px;background:#d6d6f0"></div>
<div class="r" style="left:961.10px;top:763.27px;width:8.70px;height:16.22px;background:#e0e0f8"></div>
<div class="r" style="left:969.80px;top:763.27px;width:16.12px;height:16.22px;background:#e0e0f8"></div>
<div class="r" style="left:985.92px;top:763.27px;width:16.12px;height:16.22px;background:#e0e0f8"></div>
<div class="r" style="left:1002.04px;top:763.27px;width:16.12px;height:16.22px;background:#e0e0f8"></div>
<div class="r" style="left:1018.16px;top:763.27px;width:16.12px;height:16.22px;background:#e0e0f8"></div>
<div class="r" style="left:1034.28px;top:763.27px;width:16.12px;height:16.22px;background:#e0e0f8"></div>
<div class="r" style="left:1050.40px;top:763.27px;width:16.12px;height:16.22px;background:#e0e0f8"></div>
<div class="r" style="left:1066.52px;top:763.27px;width:16.12px;height:16.22px;background:#e0e0f8"></div>
<div class="r" style="left:1082.64px;top:763.27px;width:16.12px;height:16.22px;background:#e0e0f8"></div>
<div class="r" style="left:1098.76px;top:763.27px;width:16.12px;height:16.22px;background:#e0e0f8"></div>
<div class="r" style="left:1114.88px;top:763.27px;width:16.12px;height:16.22px;background:#e0e0f8"></div>
<div class="r" style="left:1131.00px;top:763.27px;width:12.00px;height:16.22px;background:#e2e2fa"></div>
<div class="r" style="left:961.10px;top:779.49px;width:8.70px;height:16.21px;background:#e2e2ec"></div>
<div class="r" style="left:969.80px;top:779.49px;width:16.12px;height:16.21px;background:#eeeefc"></div>
<div class="r" style="left:985.92px;top:779.49px;width:16.12px;height:16.21px;background:#eeeefc"></div>
<div class="r" style="left:1002.04px;top:779.49px;width:16.12px;height:16.21px;background:#eeeefc"></div>
<div class="r" style="left:1018.16px;top:779.49px;width:16.12px;height:16.21px;background:#eeeefc"></div>
<div class="r" style="left:1034.28px;top:779.49px;width:16.12px;height:16.21px;background:#eeeefc"></div>
<div class="r" style="left:1050.40px;top:779.49px;width:16.12px;height:16.21px;background:#eeeefc"></div>
<div class="r" style="left:1066.52px;top:779.49px;width:16.12px;height:16.21px;background:#eeeefc"></div>
<div class="r" style="left:1082.64px;top:779.49px;width:16.12px;height:16.21px;background:#eeeefc"></div>
<div class="r" style="left:1098.76px;top:779.49px;width:16.12px;height:16.21px;background:#eeeefc"></div>
<div class="r" style="left:1114.88px;top:779.49px;width:16.12px;height:16.21px;background:#eeeefc"></div>
<div class="r" style="left:1131.00px;top:779.49px;width:12.00px;height:16.21px;background:#e8e8fa"></div>
<div class="r" style="left:961.10px;top:795.70px;width:8.70px;height:16.22px;background:#e8e8f7"></div>
<div class="r" style="left:969.80px;top:795.70px;width:16.12px;height:16.22px;background:#e8e8f7"></div>
<div class="r" style="left:985.92px;top:795.70px;width:16.12px;height:16.22px;background:#e4e4f3"></div>
<div class="r" style="left:1002.04px;top:795.70px;width:16.12px;height:16.22px;background:#e8e8f7"></div>
<div class="r" style="left:1018.16px;top:795.70px;width:16.12px;height:16.22px;background:#e8e8f7"></div>
<div class="r" style="left:1034.28px;top:795.70px;width:16.12px;height:16.22px;background:#e8e8f7"></div>
<div class="r" style="left:1050.40px;top:795.70px;width:16.12px;height:16.22px;background:#e8e8f7"></div>
<div class="r" style="left:1066.52px;top:795.70px;width:16.12px;height:16.22px;background:#e8e8f7"></div>
<div class="r" style="left:1082.64px;top:795.70px;width:16.12px;height:16.22px;background:#e8e8f7"></div>
<div class="r" style="left:1098.76px;top:795.70px;width:16.12px;height:16.22px;background:#eeeefd"></div>
<div class="r" style="left:1114.88px;top:795.70px;width:16.12px;height:16.22px;background:#ececfb"></div>
<div class="r" style="left:1131.00px;top:795.70px;width:12.00px;height:16.22px;background:#e8e8fc"></div>
<div class="r" style="left:961.10px;top:811.92px;width:8.70px;height:16.22px;background:#c0c0cb"></div>
<div class="r" style="left:969.80px;top:811.92px;width:16.12px;height:16.22px;background:#c0c0cb"></div>
<div class="r" style="left:985.92px;top:811.92px;width:16.12px;height:16.22px;background:#babac5"></div>
<div class="r" style="left:1002.04px;top:811.92px;width:16.12px;height:16.22px;background:#c0c0cb"></div>
<div class="r" style="left:1018.16px;top:811.92px;width:16.12px;height:16.22px;background:#c0c0cb"></div>
<div class="r" style="left:1034.28px;top:811.92px;width:16.12px;height:16.22px;background:#c0c0cb"></div>
<div class="r" style="left:1050.40px;top:811.92px;width:16.12px;height:16.22px;background:#c0c0cb"></div>
<div class="r" style="left:1066.52px;top:811.92px;width:16.12px;height:16.22px;background:#c3c3ce"></div>
<div class="r" style="left:1082.64px;top:811.92px;width:16.12px;height:16.22px;background:#c0c0cb"></div>
<div class="r" style="left:1098.76px;top:811.92px;width:16.12px;height:16.22px;background:#cbcbd6"></div>
<div class="r" style="left:1114.88px;top:811.92px;width:16.12px;height:16.22px;background:#c5c5d0"></div>
<div class="r" style="left:1131.00px;top:811.92px;width:12.00px;height:16.22px;background:#c8c8d9"></div>
<div class="r" style="left:961.10px;top:828.13px;width:8.70px;height:16.21px;background:#dedef6"></div>
<div class="r" style="left:969.80px;top:828.13px;width:16.12px;height:16.21px;background:#dedef6"></div>
<div class="r" style="left:985.92px;top:828.13px;width:16.12px;height:16.21px;background:#dedef6"></div>
<div class="r" style="left:1002.04px;top:828.13px;width:16.12px;height:16.21px;background:#dedef6"></div>
<div class="r" style="left:1018.16px;top:828.13px;width:16.12px;height:16.21px;background:#dedef6"></div>
<div class="r" style="left:1034.28px;top:828.13px;width:16.12px;height:16.21px;background:#dedef6"></div>
<div class="r" style="left:1050.40px;top:828.13px;width:16.12px;height:16.21px;background:#dedef6"></div>
<div class="r" style="left:1066.52px;top:828.13px;width:16.12px;height:16.21px;background:#dedef6"></div>
<div class="r" style="left:1082.64px;top:828.13px;width:16.12px;height:16.21px;background:#dedef6"></div>
<div class="r" style="left:1098.76px;top:828.13px;width:16.12px;height:16.21px;background:#dedef6"></div>
<div class="r" style="left:1114.88px;top:828.13px;width:16.12px;height:16.21px;background:#dedef6"></div>
<div class="r" style="left:1131.00px;top:828.13px;width:12.00px;height:16.21px;background:#e0e0f8"></div>
<div class="r" style="left:961.10px;top:844.35px;width:8.70px;height:16.22px;background:#dedef6"></div>
<div class="r" style="left:969.80px;top:844.35px;width:16.12px;height:16.22px;background:#dedef6"></div>
<div class="r" style="left:985.92px;top:844.35px;width:16.12px;height:16.22px;background:#dedef6"></div>
<div class="r" style="left:1002.04px;top:844.35px;width:16.12px;height:16.22px;background:#dedef6"></div>
<div class="r" style="left:1018.16px;top:844.35px;width:16.12px;height:16.22px;background:#dedef6"></div>
<div class="r" style="left:1034.28px;top:844.35px;width:16.12px;height:16.22px;background:#dedef6"></div>
<div class="r" style="left:1050.40px;top:844.35px;width:16.12px;height:16.22px;background:#dedef6"></div>
<div class="r" style="left:1066.52px;top:844.35px;width:16.12px;height:16.22px;background:#dedef6"></div>
<div class="r" style="left:1082.64px;top:844.35px;width:16.12px;height:16.22px;background:#dedef6"></div>
<div class="r" style="left:1098.76px;top:844.35px;width:16.12px;height:16.22px;background:#dedef6"></div>
<div class="r" style="left:1114.88px;top:844.35px;width:16.12px;height:16.22px;background:#dedef6"></div>
<div class="r" style="left:1131.00px;top:844.35px;width:12.00px;height:16.22px;background:#e0e0f8"></div>
<div class="r" style="left:961.10px;top:860.57px;width:8.70px;height:16.43px;background:#e4e4ec"></div>
<div class="r" style="left:969.80px;top:860.57px;width:16.12px;height:16.43px;background:#f0f0fc"></div>
<div class="r" style="left:985.92px;top:860.57px;width:16.12px;height:16.43px;background:#f0f0fc"></div>
<div class="r" style="left:1002.04px;top:860.57px;width:16.12px;height:16.43px;background:#f0f0fc"></div>
<div class="r" style="left:1018.16px;top:860.57px;width:16.12px;height:16.43px;background:#f0f0fc"></div>
<div class="r" style="left:1034.28px;top:860.57px;width:16.12px;height:16.43px;background:#f0f0fc"></div>
<div class="r" style="left:1050.40px;top:860.57px;width:16.12px;height:16.43px;background:#f0f0fc"></div>
<div class="r" style="left:1066.52px;top:860.57px;width:16.12px;height:16.43px;background:#f0f0fc"></div>
<div class="r" style="left:1082.64px;top:860.57px;width:16.12px;height:16.43px;background:#f0f0fc"></div>
<div class="r" style="left:1098.76px;top:860.57px;width:16.12px;height:16.43px;background:#f0f0fc"></div>
<div class="r" style="left:1114.88px;top:860.57px;width:16.12px;height:16.43px;background:#f0f0fc"></div>
<div class="r" style="left:1131.00px;top:860.57px;width:12.00px;height:16.43px;background:#eaeafa"></div>
<div class="r" style="left:679.00px;top:1.00px;width:127.80px;height:87.80px;border:7px solid #fb2c6b;border-radius:22px;box-sizing:border-box"></div>
<div class="r" style="left:905.00px;top:168.40px;width:265.30px;height:100.50px;border:7px solid #fb2c6b;border-radius:22px;box-sizing:border-box"></div>
<svg class="r" style="left:0;top:0;overflow:visible;filter:drop-shadow(0.8px 1.6px 1.2px rgba(0,0,0,0.35))" width="1212" height="877" viewBox="0 0 1212 877"><path d="M368.9 497.8 L399.4 455.4 L402 468.8 L430 455.7 L560 393.1 L620 363.5 L720 313.8 L780 283.8 L865 240.2 L886.5 229.8 A2.6 2.6 0 0 1 888.7 234.4 L865 246 L800 280.2 L720 322.9 L560 408.5 L430 478.2 L412.2 488.7 L421.6 497.6Z" fill="#fb2c6b"/></svg>
</body></html>
